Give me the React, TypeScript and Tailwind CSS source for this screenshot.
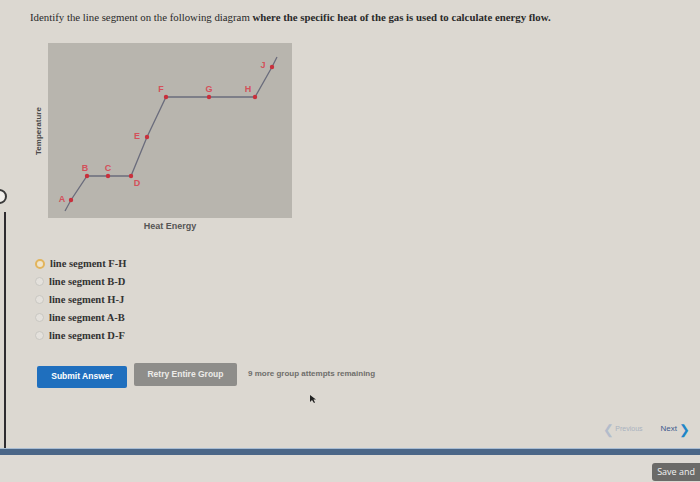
import React from 'react';

const points: { id: string; x: number; y: number; lx: number; ly: number }[] = [
  { id: 'A', x: 23, y: 157, lx: 14, ly: 159 },
  { id: 'B', x: 39, y: 133, lx: 37, ly: 128 },
  { id: 'C', x: 60, y: 133, lx: 60, ly: 128 },
  { id: 'D', x: 83, y: 133, lx: 89, ly: 143 },
  { id: 'E', x: 99, y: 94, lx: 89, ly: 96 },
  { id: 'F', x: 118, y: 54, lx: 113, ly: 49 },
  { id: 'G', x: 161, y: 54, lx: 161, ly: 49 },
  { id: 'H', x: 207, y: 54, lx: 200, ly: 49 },
  { id: 'J', x: 224, y: 24, lx: 215, ly: 25 },
];

const options = ['line segment F-H', 'line segment B-D', 'line segment H-J', 'line segment A-B', 'line segment D-F'];

function Chart() {
  return (
    <svg width="244" height="175" viewBox="0 0 244 175">
      <polyline
        points="17,168 23,157 39,133 83,133 99,94 118,54 207,54 224,24 229,14"
        fill="none"
        stroke="#6a6c7c"
        strokeWidth="1.3"
      />
      {points.map((p) => (
        <g key={p.id}>
          <circle cx={p.x} cy={p.y} r="2.2" fill="#c8303c" />
          <text
            x={p.lx}
            y={p.ly}
            textAnchor="middle"
            fontSize="9"
            fontWeight="bold"
            fill="#d4505a"
            fontFamily="Liberation Sans, Arial, sans-serif"
          >
            {p.id}
          </text>
        </g>
      ))}
    </svg>
  );
}

export default function App() {
  return (
    <div className="relative w-[700px] h-[482px] overflow-hidden bg-[#dcd8d1] flex flex-col">
      {/* left edge arrow + rule */}
      <div className="absolute left-[-8px] top-[189px] w-[15px] h-[15px] rounded-full bg-[#f2f0ec] border-2 border-[#3a3a3a]" />
      <div className="absolute left-[4px] top-[212px] w-[2px] h-[236px] bg-[#2e2c30]" />

      <div className="flex-1 flex flex-col pl-[30px] pt-[11px]">
        <p className="text-[10.8px] leading-[12px] text-[#2a2a2a] font-['Liberation_Serif',serif]">
          Identify the line segment on the following diagram{' '}
          <span className="font-bold">where the specific heat of the gas is used to calculate energy flow.</span>
        </p>

        {/* diagram */}
        <div className="mt-[20px] flex items-start">
          <div className="w-[18px] h-[175px] flex items-center justify-center">
            <span className="-rotate-90 whitespace-nowrap text-[8px] font-bold text-[#4a4a4a] font-['Liberation_Sans',sans-serif]">
              Temperature
            </span>
          </div>
          <div className="bg-[#b8b5ae] w-[244px] h-[175px]">
            <Chart />
          </div>
        </div>
        <div className="ml-[18px] w-[244px] text-center mt-[2px] text-[9px] font-bold text-[#555] font-['Liberation_Sans',sans-serif]">
          Heat Energy
        </div>

        {/* choices */}
        <div className="mt-[24px] flex flex-col gap-[6px] pl-[5px]">
          {options.map((o, i) => (
            <label key={o} className="flex items-center gap-[5px] h-[12px]">
              <span
                className={
                  i === 0
                    ? 'w-[10px] h-[10px] rounded-full border-[2px] border-[#e2b45c] bg-[#efe4cc]'
                    : 'w-[9px] h-[9px] rounded-full border border-[#c9c7c2] bg-[#e4e1dc]'
                }
              />
              <span className="text-[10.5px] font-bold text-[#333] font-['Liberation_Serif',serif]">{o}</span>
            </label>
          ))}
        </div>

        {/* buttons */}
        <div className="mt-[19px] flex items-center pl-[7px]">
          <button className="w-[90px] h-[22px] mt-[5px] rounded-[2px] bg-[#1f6fbe] text-white text-[8.5px] font-bold font-['Liberation_Sans',sans-serif]">
            Submit Answer
          </button>
          <button className="ml-[7px] w-[103px] h-[23px] rounded-[2px] bg-[#8e8d8a] text-[#ecebe8] text-[8.5px] font-bold font-['Liberation_Sans',sans-serif]">
            Retry Entire Group
          </button>
          <span className="ml-[11px] text-[8px] font-bold text-[#6f6e6b] font-['Liberation_Sans',sans-serif]">
            9 more group attempts remaining
          </span>
        </div>

        {/* prev / next */}
        <div className="mt-[32px] flex items-center justify-end pr-[10px] gap-[18px] font-['Liberation_Sans',sans-serif]">
          <span className="flex items-center text-[7px] text-[#a9b2bf]">
            <span className="text-[13px] text-[#b3bccb] mr-[1px]">❮</span>Previous
          </span>
          <span className="flex items-center text-[8px] text-[#3d5a8e]">
            Next<span className="text-[13px] text-[#1e86c8] ml-[2px]">❯</span>
          </span>
        </div>
      </div>

      {/* cursor */}
      <svg className="absolute left-[309px] top-[394px]" width="8" height="10" viewBox="0 0 8 10">
        <path d="M1 1 L1 8 L3 6 L5 9 L6 8.5 L4.5 5.5 L7 5.5 Z" fill="#222" />
      </svg>

      {/* bottom bar */}
      <div className="h-[7px] bg-[#4b6687] border-t border-[#a9bdd3]" />
      <div className="h-[27px] bg-[#dedad4] flex items-center justify-end">
        <button className="mt-[6px] h-[18px] px-[5px] rounded-l-[3px] bg-[#6b6a68] text-[#f2f2f2] text-[9px] font-['Open_Sans',sans-serif]">
          Save and
        </button>
      </div>
    </div>
  );
}
